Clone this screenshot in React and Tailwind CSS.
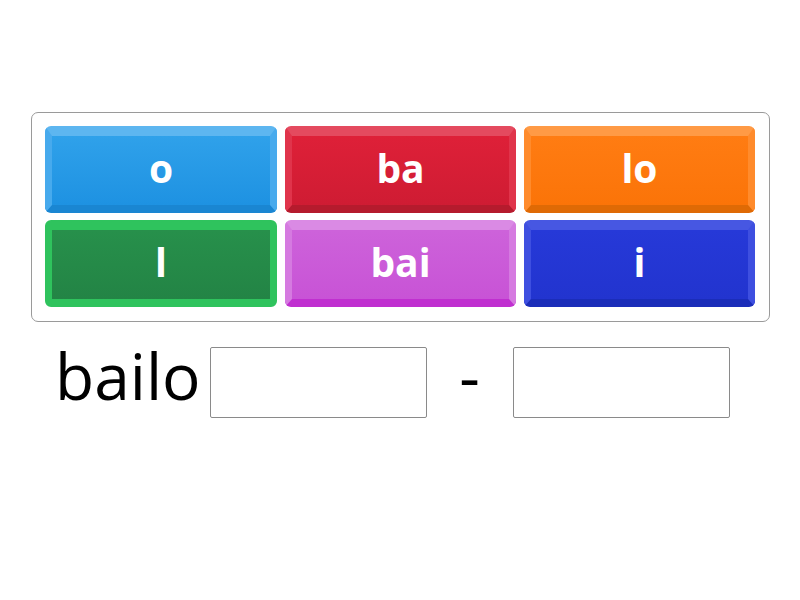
import React from "react";

const tiles = [
  { t: "o", top: "border-t-[#5db6f0]", side: "border-x-[#47aaed]", bot: "border-b-[#1a86d2]", bg: "bg-gradient-to-b from-[#2fa1ea] to-[#1e92e2]" },
  { t: "ba", top: "border-t-[#e44a5f]", side: "border-x-[#e0344b]", bot: "border-b-[#b51b2d]", bg: "bg-gradient-to-b from-[#de2038] to-[#cf1c33]" },
  { t: "lo", top: "border-t-[#ff9a45]", side: "border-x-[#ff8b2c]", bot: "border-b-[#df6a05]", bg: "bg-gradient-to-b from-[#ff7c12] to-[#fb7408]" },
  { t: "l", top: "border-t-[#2fc35d]", side: "border-x-[#2fc35d]", bot: "border-b-[#2fc35d]", bg: "bg-gradient-to-b from-[#27904b] to-[#238445]" },
  { t: "bai", top: "border-t-[#da8ae4]", side: "border-x-[#d57ae0]", bot: "border-b-[#c02fd0]", bg: "bg-gradient-to-b from-[#cd62da] to-[#c853d6]" },
  { t: "i", top: "border-t-[#4757e2]", side: "border-x-[#3e4fe0]", bot: "border-b-[#1b2db9]", bg: "bg-gradient-to-b from-[#2639d8] to-[#2234cf]" },
];

export default function App() {
  return (
    <div className="w-[800px] h-[600px] bg-white" style={{ fontFamily: '"Open Sans", "Noto Sans", sans-serif' }}>
      <div className="pt-[112px] pl-[31px]">
        <div className="w-[739px] h-[210px] border border-[#9a9a9a] rounded-[7px] bg-white p-[13px]">
          <div className="grid grid-cols-[232px_231px_231px] grid-rows-[87px_87px] gap-x-[8px] gap-y-[7px]">
            {tiles.map((x) => (
              <div
                key={x.t}
                className={`rounded-[6px] border-t-[10px] border-x-[7px] border-b-[8px] ${x.top} ${x.side} ${x.bot} ${x.bg} flex items-center justify-center text-white font-bold text-[39px] leading-none`}
              >
                <span className="-mt-[7px]">{x.t}</span>
              </div>
            ))}
          </div>
        </div>
      </div>
      <div className="flex items-start mt-[25px] pl-[55px]">
        <span className="text-[64px] leading-[64px] -mt-[3px] text-black">bailo</span>
        <div className="ml-[9px] w-[217px] h-[71px] border border-[#8a8a8a] rounded-[2px] bg-white" />
        <span className="w-[86px] text-center text-[64px] leading-[64px] -mt-[3px] text-black">-</span>
        <div className="w-[217px] h-[71px] border border-[#8a8a8a] rounded-[2px] bg-white" />
      </div>
    </div>
  );
}
